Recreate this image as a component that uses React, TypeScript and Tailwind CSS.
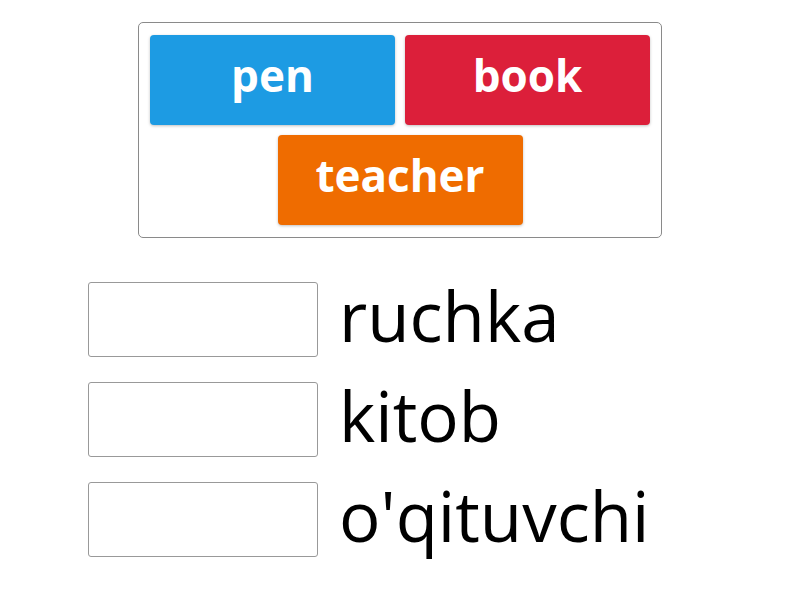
import React from "react";

const tiles = [
  { label: "pen", color: "bg-[#1d9be3]" },
  { label: "book", color: "bg-[#dc1f3a]" },
  { label: "teacher", color: "bg-[#ef6c00]" },
];

const answers = ["ruchka", "kitob", "o'qituvchi"];

export default function App() {
  return (
    <div className="w-[800px] h-[600px] bg-white flex flex-col items-center pt-[22px] font-['Open_Sans',sans-serif]">
      <div className="w-[524px] h-[216px] border border-[#8a8a8a] rounded-[5px] flex flex-wrap justify-center content-start gap-[10px] pt-[12px] px-[11px]">
        {tiles.map((t) => (
          <div
            key={t.label}
            className={`${t.color} w-[245px] h-[90px] rounded-[4px] flex items-center justify-center text-white font-bold text-[44px] leading-none pb-[11px] shadow-[0_1px_3px_rgba(0,0,0,0.25)]`}
          >
            {t.label}
          </div>
        ))}
      </div>
      <div className="w-full flex flex-col gap-[25px] pt-[44px] pl-[88px]">
        {answers.map((a) => (
          <div key={a} className="flex items-center gap-[21px] h-[75px]">
            <div className="w-[230px] h-[75px] border border-[#999] rounded-[3px] bg-white" />
            <span className="text-[69px] text-black leading-none pb-[8px]">{a}</span>
          </div>
        ))}
      </div>
    </div>
  );
}
